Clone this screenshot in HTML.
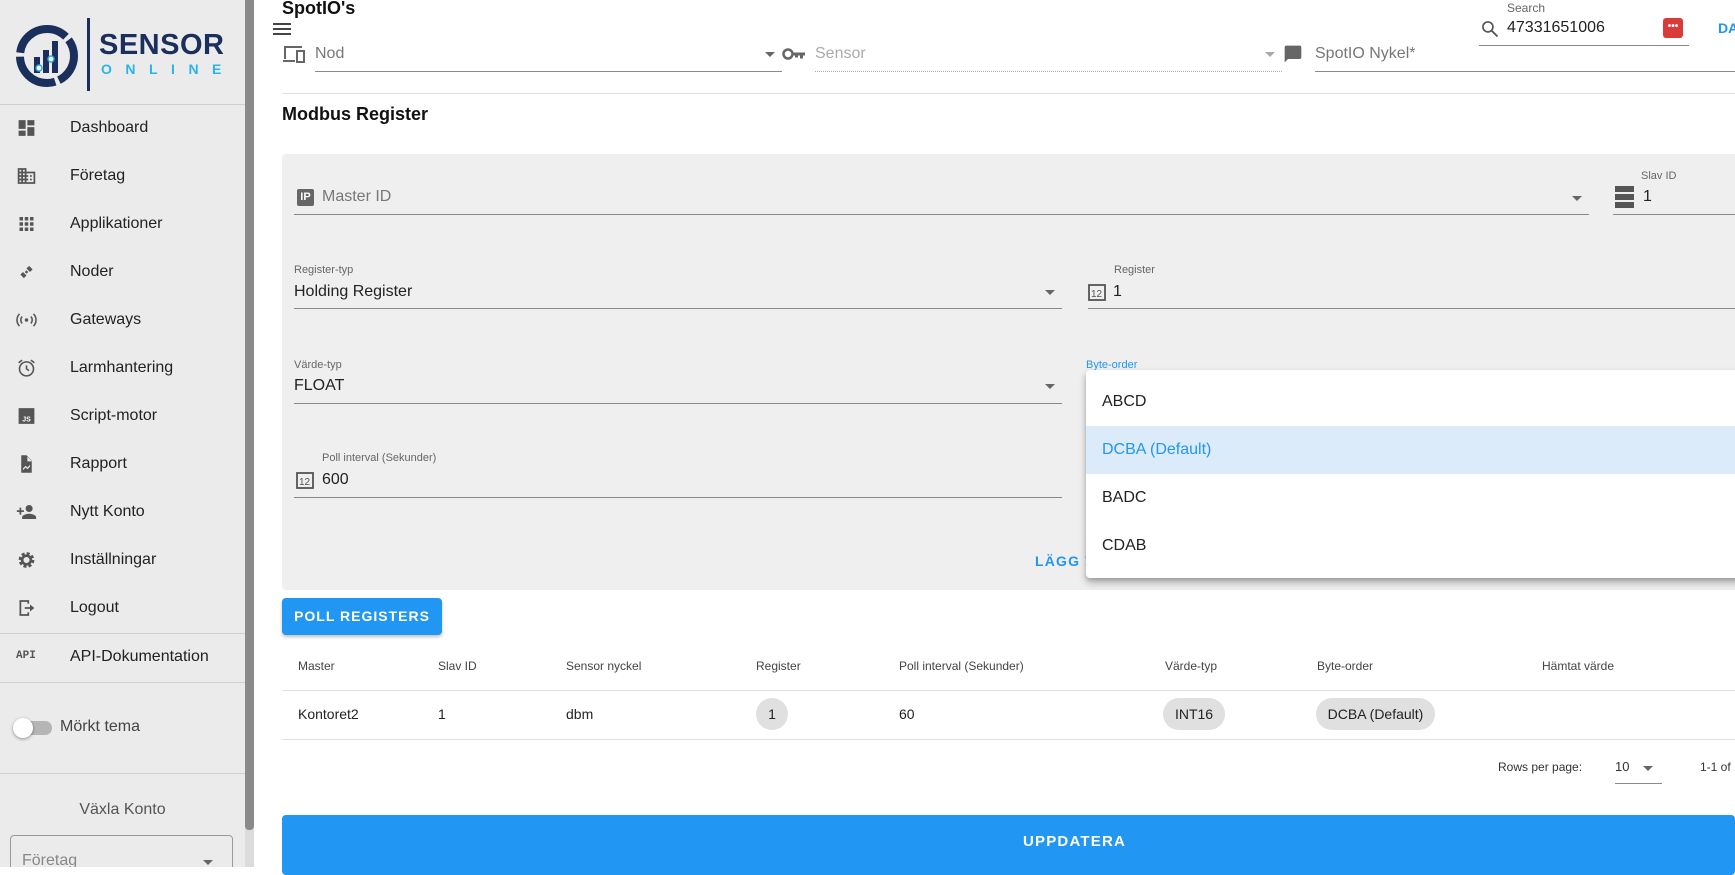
<!DOCTYPE html>
<html><head><meta charset="utf-8"><style>
*{box-sizing:border-box;margin:0;padding:0}
body{width:1735px;height:867px;overflow:hidden;background:#fff;font-family:"Liberation Sans",Arial,sans-serif;position:relative;color:#222}
.a{position:absolute;white-space:nowrap}
#side{position:absolute;left:0;top:0;width:245px;height:867px;background:#ebebeb;overflow:hidden}
#scroll{position:absolute;left:245px;top:0;width:9px;height:830px;background:#8a8a8a;border-radius:0 0 4px 4px}
#scrolltrack{position:absolute;left:245px;top:0;width:9px;height:867px;background:#dcdcdc}
.hr{position:absolute;height:1px;background:#d0d0d0}
.mi{position:absolute;left:70px;font-size:16px;color:#222;transform:translateY(-50%)}
.ic{position:absolute;left:16px;width:21px;height:21px;transform:translateY(-50%)}
.lbl{position:absolute;font-size:12px;color:#666}
.val{position:absolute;font-size:16px;color:#222;transform:translateY(-50%)}
.ph{position:absolute;font-size:16px;color:#777;transform:translateY(-50%)}
.ul{position:absolute;height:1px;background:#8a8a8a}
.arr{position:absolute;width:0;height:0;border-left:5px solid transparent;border-right:5px solid transparent;border-top:5px solid #666}
.th{position:absolute;top:666px;font-size:12px;color:#444;transform:translateY(-50%)}
.td{position:absolute;top:714px;font-size:14px;color:#222;transform:translateY(-50%)}
.chip{position:absolute;top:698px;height:32px;border-radius:16px;background:#e0e0e0;font-size:14px;line-height:32px;text-align:center;color:#222}
.opt{position:absolute;left:16px;font-size:16px;color:#222;transform:translateY(-50%)}
</style></head><body>
<div id="side">
 <svg class="a" style="left:14px;top:23px" width="66" height="66" viewBox="0 0 66 66">
  <circle cx="33" cy="33" r="27" fill="none" stroke="#1b2f5c" stroke-width="8" stroke-dasharray="30 4 50 4 60 4 20 5"/>
  <rect x="20" y="34" width="6" height="16" fill="#1b2f5c"/>
  <rect x="29" y="27" width="6" height="23" fill="#1b2f5c"/>
  <rect x="38" y="18" width="6" height="32" fill="#1b2f5c"/>
  <circle cx="25" cy="45" r="3" fill="#fff" stroke="#29a8e0" stroke-width="1.5"/>
  <circle cx="37" cy="36" r="3" fill="#fff" stroke="#29a8e0" stroke-width="1.5"/>
 </svg>
 <div class="a" style="left:87px;top:18px;width:3px;height:73px;background:#1b2f5c"></div>
 <div class="a" style="left:99px;top:29px;font-size:29px;font-weight:bold;color:#1b2f5c;letter-spacing:0.5px">SENSOR</div>
 <div class="a" style="left:101px;top:61px;font-size:14px;font-weight:bold;color:#29b5e8;letter-spacing:13.5px">ONLINE</div>
 <div class="hr" style="left:0;top:104px;width:245px"></div>
 <svg class="ic" style="top:128px" viewBox="0 0 24 24"><path fill="#555" d="M3 13h8V3H3v10zm0 8h8v-6H3v6zm10 0h8V11h-8v10zm0-18v6h8V3h-8z"/></svg><div class="mi" style="top:128px">Dashboard</div>
 <svg class="ic" style="top:176px" viewBox="0 0 24 24"><path fill="#555" d="M12 7V3H2v18h20V7H12zM6 19H4v-2h2v2zm0-4H4v-2h2v2zm0-4H4V9h2v2zm0-4H4V5h2v2zm4 12H8v-2h2v2zm0-4H8v-2h2v2zm0-4H8V9h2v2zm0-4H8V5h2v2zm10 12h-8v-2h2v-2h-2v-2h2v-2h-2V9h8v10zm-2-8h-2v2h2v-2zm0 4h-2v2h2v-2z"/></svg><div class="mi" style="top:176px">Företag</div>
 <svg class="ic" style="top:224px" viewBox="0 0 24 24"><path fill="#555" d="M4 8h4V4H4v4zm6 12h4v-4h-4v4zm-6 0h4v-4H4v4zm0-6h4v-4H4v4zm6 0h4v-4h-4v4zm6-10v4h4V4h-4zm-6 4h4V4h-4v4zm6 6h4v-4h-4v4zm0 6h4v-4h-4v4z"/></svg><div class="mi" style="top:224px">Applikationer</div>
 <svg class="ic" style="top:272px" viewBox="0 0 24 24"><path fill="#555" d="M21 3l-4 4-2-2-3 3 4 4 3-3-2-2 4-4zM3 21l4-4 2 2 3-3-4-4-3 3 2 2-4 4zm7-9l2 2 2-2-2-2z"/></svg><div class="mi" style="top:272px">Noder</div>
 <svg class="ic" style="top:320px" viewBox="0 0 24 24"><g fill="none" stroke="#555" stroke-width="1.8"><path d="M7 8a6 6 0 0 0 0 8M17 8a6 6 0 0 1 0 8M4 5a10 10 0 0 0 0 14M20 5a10 10 0 0 1 0 14"/></g><circle cx="12" cy="12" r="2" fill="#555"/></svg><div class="mi" style="top:320px">Gateways</div>
 <svg class="ic" style="top:368px" viewBox="0 0 24 24"><g fill="none" stroke="#555" stroke-width="1.8"><circle cx="12" cy="13" r="8"/><path d="M12 9v4l3 2M3 6l4-3M21 6l-4-3"/></g></svg><div class="mi" style="top:368px">Larmhantering</div>
 <svg class="ic" style="top:416px" viewBox="0 0 24 24"><rect x="3" y="3" width="18" height="18" fill="#555"/><text x="12" y="18" font-size="8" fill="#fff" text-anchor="middle" font-family="Liberation Sans" font-weight="bold">JS</text></svg><div class="mi" style="top:416px">Script-motor</div>
 <svg class="ic" style="top:464px" viewBox="0 0 24 24"><path fill="#555" d="M14 2H6v20h12V8l-6-6zm-1 7V3.5L18.5 9H13zM8 17l3-3 2 2 3-3v2l-3 3-2-2-3 3z"/></svg><div class="mi" style="top:464px">Rapport</div>
 <svg class="ic" style="top:512px" viewBox="0 0 24 24"><path fill="#555" d="M15 12c2.2 0 4-1.8 4-4s-1.8-4-4-4-4 1.8-4 4 1.8 4 4 4zm-9-2V7H4v3H1v2h3v3h2v-3h3v-2H6zm9 4c-2.7 0-8 1.3-8 4v2h16v-2c0-2.7-5.300-4-8-4z"/></svg><div class="mi" style="top:512px">Nytt Konto</div>
 <svg class="ic" style="top:560px" viewBox="0 0 24 24"><circle cx="12" cy="12" r="6.5" fill="none" stroke="#555" stroke-width="5" stroke-dasharray="3 2.1"/><circle cx="12" cy="12" r="5" fill="none" stroke="#555" stroke-width="3"/></svg><div class="mi" style="top:560px">Inställningar</div>
 <svg class="ic" style="top:608px" viewBox="0 0 24 24"><path fill="none" stroke="#555" stroke-width="2" d="M14 7V4H5v16h9v-3"/><path fill="#555" d="M10 11h6V8l5 4-5 4v-3h-6z"/></svg><div class="mi" style="top:608px">Logout</div>
 <div class="hr" style="left:0;top:633px;width:245px"></div>
 <div class="a" style="left:16px;top:650px;font-size:11px;font-weight:bold;font-family:'Liberation Mono',monospace;color:#555">API</div><div class="mi" style="top:657px">API-Dokumentation</div>
 <div class="hr" style="left:0;top:682px;width:245px"></div>
 <div class="a" style="left:16px;top:721px;width:36px;height:14px;border-radius:7px;background:#b5b5b5"></div>
 <div class="a" style="left:13px;top:718px;width:20px;height:20px;border-radius:50%;background:#fff;box-shadow:0 1px 3px rgba(0,0,0,.4)"></div>
 <div class="a" style="left:60px;top:718px;font-size:16px;color:#444">Mörkt tema</div>
 <div class="hr" style="left:0;top:773px;width:245px"></div>
 <div class="a" style="left:0;width:245px;text-align:center;top:801px;font-size:16px;color:#555">Växla Konto</div>
 <div class="a" style="left:10px;top:835px;width:223px;height:40px;border:1px solid #999;border-radius:4px"></div>
 <div class="a" style="left:22px;top:852px;font-size:16px;color:#888">Företag</div>
 <div class="arr" style="left:203px;top:860px"></div>
</div>
<div id="scrolltrack"></div><div id="scroll"></div>

<div class="a" style="left:282px;top:-2px;font-size:18px;font-weight:bold;color:#111">SpotIO's</div>
<div class="a" style="left:273px;top:23px;width:18px;height:2px;background:#444"></div>
<div class="a" style="left:273px;top:28px;width:18px;height:2px;background:#444"></div>
<div class="a" style="left:273px;top:33px;width:18px;height:2px;background:#444"></div>
<svg class="a" style="left:282px;top:44px" width="24" height="20" viewBox="0 0 24 20"><path fill="none" stroke="#666" stroke-width="2" d="M3 15V3h17M1 17h12"/><rect x="15" y="7" width="7" height="11" fill="none" stroke="#666" stroke-width="2"/></svg>
<div class="ph" style="left:315px;top:54px">Nod</div>
<div class="arr" style="left:765px;top:52px"></div>
<div class="ul" style="left:315px;top:71px;width:467px"></div>
<svg class="a" style="left:782px;top:47px" width="24" height="14" viewBox="0 0 24 14"><circle cx="6" cy="7" r="4.5" fill="none" stroke="#666" stroke-width="2.5"/><path fill="#666" d="M10 5.5h13v3h-2v3h-3v-3h-2v2h-3v-2h-3z"/></svg>
<div class="ph" style="left:815px;top:54px;color:#aaa">Sensor</div>
<div class="arr" style="left:1265px;top:52px;border-top-color:#aaa"></div>
<div class="a" style="left:815px;top:71px;width:467px;border-top:1px dotted #aaa"></div>
<svg class="a" style="left:1283px;top:44px" width="20" height="20" viewBox="0 0 24 24"><path fill="#666" d="M20 2H4c-1.1 0-2 .9-2 2v18l4-4h14c1.1 0 2-.9 2-2V4c0-1.1-.9-2-2-2z"/></svg>
<div class="ph" style="left:1315px;top:54px">SpotIO Nykel*</div>
<div class="ul" style="left:1315px;top:71px;width:420px"></div>
<div class="a" style="left:1507px;top:1px;font-size:12px;color:#666">Search</div>
<svg class="a" style="left:1480px;top:19px" width="20" height="20" viewBox="0 0 24 24"><circle cx="9.5" cy="9.5" r="6" fill="none" stroke="#555" stroke-width="2"/><path d="M14 14l7 7" stroke="#555" stroke-width="2.2"/></svg>
<div class="val" style="left:1507px;top:28px">47331651006</div>
<div class="a" style="left:1663px;top:18px;width:20px;height:20px;border-radius:3px;background:#d93a3a;color:#fff;font-size:10px;line-height:18px;text-align:center;font-weight:bold">•••</div>
<div class="ul" style="left:1479px;top:45px;width:210px"></div>
<div class="a" style="left:1718px;top:20px;font-size:14px;font-weight:bold;color:#2196f3">DA</div>
<div class="hr" style="left:282px;top:93px;width:1453px;background:#e0e0e0"></div>
<div class="a" style="left:282px;top:104px;font-size:18px;font-weight:bold;color:#111">Modbus Register</div>

<div class="a" style="left:282px;top:154px;width:1453px;height:436px;background:#efefef;border-radius:4px 0 0 4px"></div>
<div class="a" style="left:297px;top:189px;width:17px;height:17px;background:#666;border-radius:2px;color:#fff;font-size:11px;font-weight:bold;line-height:17px;text-align:center">IP</div>
<div class="ph" style="left:322px;top:197px">Master ID</div>
<div class="arr" style="left:1572px;top:196px"></div>
<div class="ul" style="left:294px;top:214px;width:1295px"></div>
<div class="lbl" style="left:1641px;top:170px;font-size:11px">Slav ID</div>
<svg class="a" style="left:1615px;top:186px" width="19" height="23" viewBox="0 0 19 23"><rect x="0" y="0" width="19" height="6" fill="#555"/><rect x="0" y="8" width="19" height="6" fill="#555"/><rect x="0" y="16" width="19" height="6" fill="#555"/></svg>
<div class="val" style="left:1643px;top:197px">1</div>
<div class="ul" style="left:1613px;top:214px;width:122px"></div>

<div class="lbl" style="left:294px;top:264px;font-size:11px">Register-typ</div>
<div class="val" style="left:294px;top:292px">Holding Register</div>
<div class="arr" style="left:1045px;top:290px"></div>
<div class="ul" style="left:294px;top:308px;width:768px"></div>
<div class="lbl" style="left:1114px;top:264px;font-size:11px">Register</div>
<svg class="a" style="left:1088px;top:284px" width="18" height="17" viewBox="0 0 18 17"><rect x="1" y="1" width="16" height="15" fill="none" stroke="#555" stroke-width="1.8"/><text x="3" y="13" font-size="10" fill="#555" font-family="Liberation Sans">12</text></svg>
<div class="val" style="left:1113px;top:292px">1</div>
<div class="ul" style="left:1088px;top:308px;width:647px"></div>

<div class="lbl" style="left:294px;top:359px;font-size:11px">Värde-typ</div>
<div class="val" style="left:294px;top:386px">FLOAT</div>
<div class="arr" style="left:1045px;top:384px"></div>
<div class="ul" style="left:294px;top:403px;width:768px"></div>
<div class="lbl" style="left:1086px;top:359px;font-size:11px;color:#2196f3">Byte-order</div>

<div class="lbl" style="left:322px;top:452px;font-size:11px">Poll interval (Sekunder)</div>
<svg class="a" style="left:296px;top:472px" width="18" height="17" viewBox="0 0 18 17"><rect x="1" y="1" width="16" height="15" fill="none" stroke="#555" stroke-width="1.8"/><text x="3" y="13" font-size="10" fill="#555" font-family="Liberation Sans">12</text></svg>
<div class="val" style="left:322px;top:480px">600</div>
<div class="ul" style="left:294px;top:497px;width:768px"></div>
<div class="a" style="left:1035px;top:553px;font-size:14px;font-weight:bold;color:#2196f3;letter-spacing:1.2px">LÄGG T</div>

<div class="a" style="left:1086px;top:370px;width:660px;height:208px;background:#fff;box-shadow:0 5px 8px rgba(0,0,0,.25),0 2px 4px rgba(0,0,0,.15);border-radius:4px">
 <div class="opt" style="top:32px">ABCD</div>
 <div class="a" style="left:0;top:56px;width:660px;height:48px;background:#dcebf9"></div>
 <div class="opt" style="top:80px;color:#2196f3">DCBA (Default)</div>
 <div class="opt" style="top:128px">BADC</div>
 <div class="opt" style="top:176px">CDAB</div>
</div>

<div class="a" style="left:282px;top:598px;width:160px;height:37px;background:#2196f3;border-radius:4px;box-shadow:0 2px 3px rgba(0,0,0,.25);color:#fff;font-size:14px;font-weight:bold;letter-spacing:1px;line-height:37px;text-align:center">POLL REGISTERS</div>

<div class="th" style="left:298px">Master</div>
<div class="th" style="left:438px">Slav ID</div>
<div class="th" style="left:566px">Sensor nyckel</div>
<div class="th" style="left:756px">Register</div>
<div class="th" style="left:899px">Poll interval (Sekunder)</div>
<div class="th" style="left:1165px">Värde-typ</div>
<div class="th" style="left:1317px">Byte-order</div>
<div class="th" style="left:1542px">Hämtat värde</div>
<div class="hr" style="left:282px;top:690px;width:1453px;background:#e0e0e0"></div>
<div class="td" style="left:298px">Kontoret2</div>
<div class="td" style="left:438px">1</div>
<div class="td" style="left:566px">dbm</div>
<div class="chip" style="left:756px;width:32px">1</div>
<div class="td" style="left:899px">60</div>
<div class="chip" style="left:1163px;width:62px">INT16</div>
<div class="chip" style="left:1316px;width:119px">DCBA (Default)</div>
<div class="hr" style="left:282px;top:739px;width:1453px;background:#e0e0e0"></div>
<div class="a" style="left:1498px;top:760px;font-size:12px;color:#333">Rows per page:</div>
<div class="a" style="left:1615px;top:759px;font-size:13px;color:#333">10</div>
<div class="arr" style="left:1643px;top:766px"></div>
<div class="ul" style="left:1615px;top:783px;width:47px"></div>
<div class="a" style="left:1700px;top:760px;font-size:12px;color:#333">1-1 of 1</div>

<div class="a" style="left:282px;top:815px;width:1453px;height:60px;background:#2196f3;border-radius:4px;color:#fff;font-size:15px;font-weight:bold;letter-spacing:1.2px;line-height:54px;text-align:center"><span style="position:relative;left:66px">UPPDATERA</span></div>
</body></html>
